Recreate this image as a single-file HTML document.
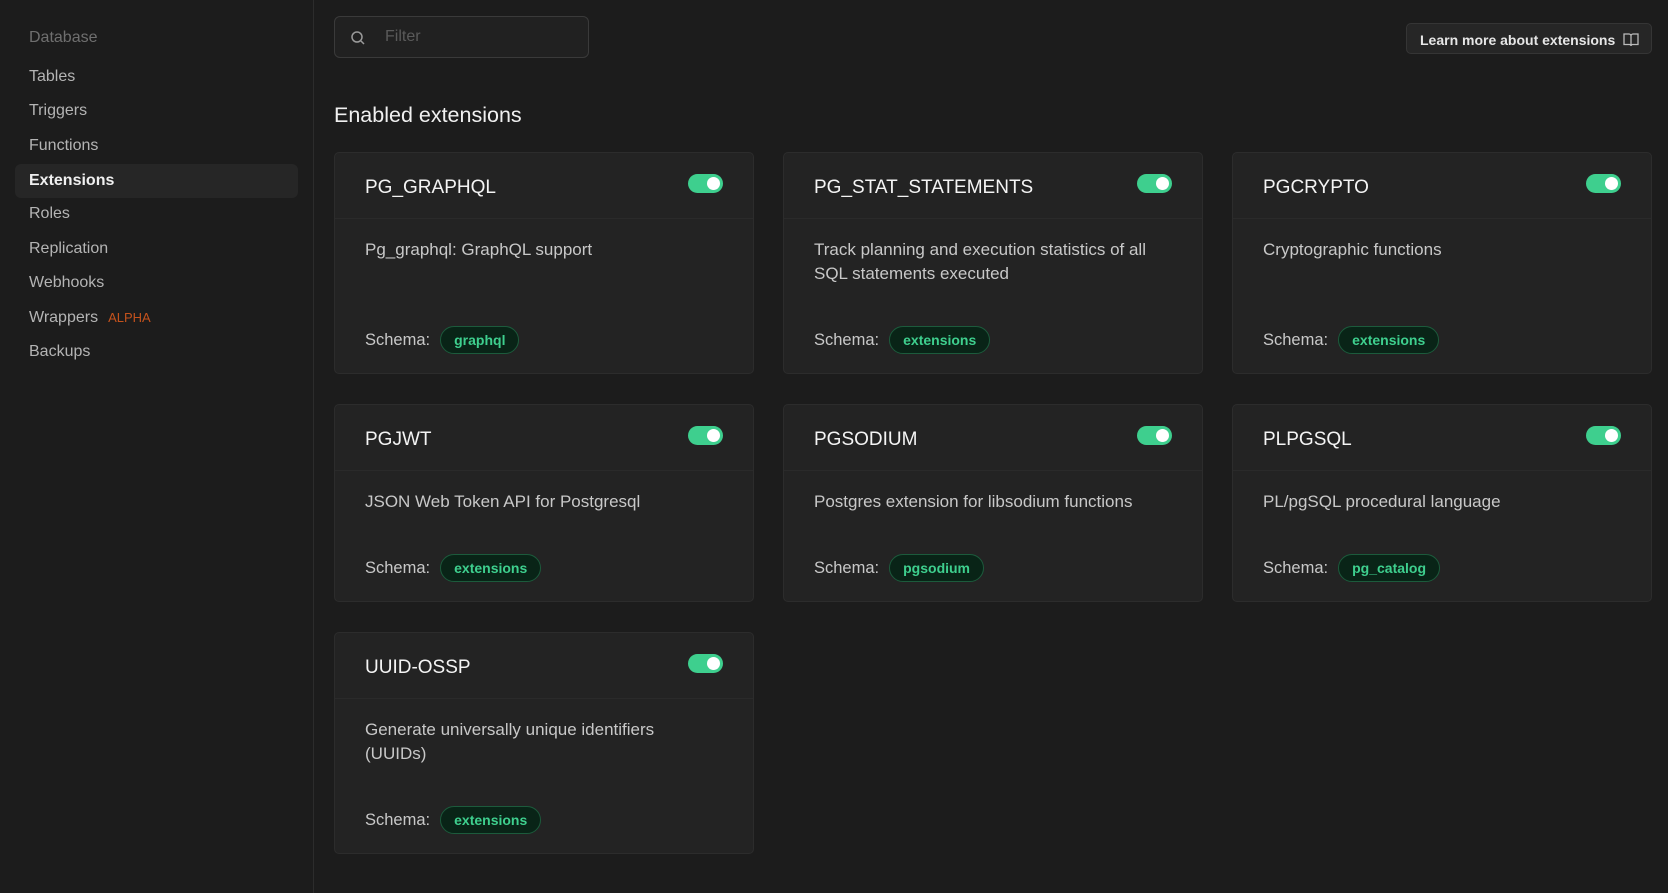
<!DOCTYPE html>
<html><head><meta charset="utf-8"><style>
*{box-sizing:border-box;margin:0;padding:0}
body{width:1668px;height:893px;background:#1c1c1c;font-family:"Liberation Sans",sans-serif;color:#ededed;position:relative;overflow:hidden}
.side{position:absolute;left:0;top:0;width:314px;height:893px;border-right:1px solid #2c2c2c;background:#1c1c1c}
.side div{position:absolute;left:29px;font-size:16px;color:#b4b4b4;line-height:20px}
.side .hd{color:#6f6f6f}
.side .act{left:15px;width:283px;height:34px;background:#262626;border-radius:6px;padding-left:14px;line-height:34px;color:#f0f0f0;font-weight:bold}
.alpha{color:#c4521c;font-size:13px;margin-left:10px}
.filter{position:absolute;left:334px;top:16px;width:255px;height:42px;border:1px solid #3a3a3a;border-radius:6px;background:#212121}
.filter span{position:absolute;left:50px;top:11px;font-size:16px;color:#5a5a5a}
.btn{position:absolute;left:1406px;top:23px;width:246px;height:31px;border:1px solid #353535;border-radius:5px;background:#262626;font-size:14px;color:#e6e6e6;font-weight:bold;padding:8px 0 0 13px}
h2{position:absolute;left:334px;top:103px;font-size:21.5px;font-weight:normal;color:#f0f0f0}
.card{position:absolute;width:420px;background:#232323;border:1px solid #2c2c2c;border-radius:5px}
.ch{height:66px;border-bottom:1px solid #2a2a2a;position:relative}
.ch b{position:absolute;left:30px;top:24px;font-size:19px;font-weight:normal;color:#f4f4f4}
.tg{position:absolute;right:30px;top:21px;width:35px;height:19px;border-radius:10px;background:#3ecf8e}
.tg:after{content:"";position:absolute;right:3px;top:3px;width:13px;height:13px;border-radius:50%;background:#fff}
.cb{padding:19px 30px 21px}
.d{font-size:17px;line-height:24px;color:#c8c8c8;min-height:24px;max-width:338px}
.s{margin-top:40px;height:28px;display:flex;align-items:center;font-size:16.5px;color:#c8c8c8}
.bd{margin-left:10px;height:28px;padding:0 13px;border:1px solid #1c5b3c;background:#092417;border-radius:14px;color:#3ecf8e;font-size:14px;font-weight:bold;line-height:26px}
</style></head><body>
<div class="side">
<div class="hd" style="top:28px">Database</div>
<div style="top:67px">Tables</div>
<div style="top:101px">Triggers</div>
<div style="top:136px">Functions</div>
<div class="act" style="top:164px">Extensions</div>
<div style="top:204px">Roles</div>
<div style="top:239px">Replication</div>
<div style="top:273px">Webhooks</div>
<div style="top:308px">Wrappers<span class="alpha">ALPHA</span></div>
<div style="top:342px">Backups</div>
</div>
<div class="filter"><svg style="position:absolute;left:15px;top:13px" width="16" height="16" viewBox="0 0 16 16" fill="none" stroke="#9a9a9a" stroke-width="1.5"><circle cx="7" cy="7" r="5"/><path d="M11 11l3 3"/></svg><span>Filter</span></div>
<div class="btn">Learn more about extensions<svg style="position:absolute;right:12px;top:8px" width="16" height="15" viewBox="0 0 16 15" fill="none" stroke="#bbb" stroke-width="1.3"><path d="M1 2h5a2 2 0 0 1 2 2v10a1.5 1.5 0 0 0-1.5-1.5H1zM15 2h-5a2 2 0 0 0-2 2v10a1.5 1.5 0 0 1 1.5-1.5H15z"/></svg></div>
<h2>Enabled extensions</h2>

<div class="card" style="left:334px;top:152px;height:222px"><div class="ch"><b>PG_GRAPHQL</b><i class="tg"></i></div><div class="cb"><div class="d" style="height:48px">Pg_graphql: GraphQL support</div><div class="s">Schema:<span class="bd">graphql</span></div></div></div>
<div class="card" style="left:783px;top:152px;height:222px"><div class="ch"><b>PG_STAT_STATEMENTS</b><i class="tg"></i></div><div class="cb"><div class="d" style="height:48px">Track planning and execution statistics of all SQL statements executed</div><div class="s">Schema:<span class="bd">extensions</span></div></div></div>
<div class="card" style="left:1232px;top:152px;height:222px"><div class="ch"><b>PGCRYPTO</b><i class="tg"></i></div><div class="cb"><div class="d" style="height:48px">Cryptographic functions</div><div class="s">Schema:<span class="bd">extensions</span></div></div></div>

<div class="card" style="left:334px;top:404px;height:198px"><div class="ch"><b>PGJWT</b><i class="tg"></i></div><div class="cb"><div class="d">JSON Web Token API for Postgresql</div><div class="s">Schema:<span class="bd">extensions</span></div></div></div>
<div class="card" style="left:783px;top:404px;height:198px"><div class="ch"><b>PGSODIUM</b><i class="tg"></i></div><div class="cb"><div class="d">Postgres extension for libsodium functions</div><div class="s">Schema:<span class="bd">pgsodium</span></div></div></div>
<div class="card" style="left:1232px;top:404px;height:198px"><div class="ch"><b>PLPGSQL</b><i class="tg"></i></div><div class="cb"><div class="d">PL/pgSQL procedural language</div><div class="s">Schema:<span class="bd">pg_catalog</span></div></div></div>

<div class="card" style="left:334px;top:632px;height:222px"><div class="ch"><b>UUID-OSSP</b><i class="tg"></i></div><div class="cb"><div class="d" style="height:48px">Generate universally unique identifiers (UUIDs)</div><div class="s">Schema:<span class="bd">extensions</span></div></div></div>
</body></html>
